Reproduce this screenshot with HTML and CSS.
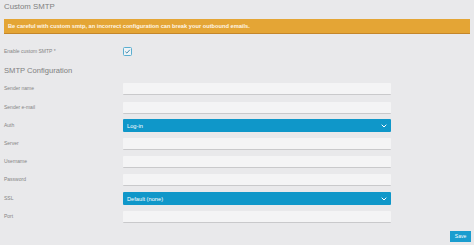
FILE: index.html
```html
<!DOCTYPE html>
<html>
<head>
<meta charset="utf-8">
<link rel="stylesheet" href="styles.css">
</head>
<body>
<div class="page">
  <h1 class="title">Custom SMTP</h1>
  <div class="alert">Be careful with custom smtp, an incorrect configuration can break your outbound emails.</div>
  <div class="row enable">
    <span class="label">Enable custom SMTP *</span>
    <span class="checkbox">
      <svg viewBox="0 0 9 9" width="9" height="9"><rect x="0.5" y="0.5" width="8" height="8" rx="1" fill="#eef3f6" stroke="#5aaed0" stroke-width="1"/><path d="M2.3 4.6 L3.9 6.1 L6.8 2.8" fill="none" stroke="#2f7fa6" stroke-width="0.9"/></svg>
    </span>
  </div>
  <h2 class="subtitle">SMTP Configuration</h2>
  <div class="form">
    <div class="row"><span class="label">Sender name</span><span class="input"></span></div>
    <div class="row"><span class="label">Sender e-mail</span><span class="input"></span></div>
    <div class="row"><span class="label">Auth</span><span class="select"><span>Log-in</span><svg class="chev" viewBox="0 0 6 4" width="6" height="4"><path d="M0.7 0.7 L3 3 L5.3 0.7" fill="none" stroke="#fff" stroke-width="1"/></svg></span></div>
    <div class="row"><span class="label">Server</span><span class="input"></span></div>
    <div class="row"><span class="label">Username</span><span class="input"></span></div>
    <div class="row"><span class="label">Password</span><span class="input"></span></div>
    <div class="row"><span class="label">SSL</span><span class="select"><span>Default (none)</span><svg class="chev" viewBox="0 0 6 4" width="6" height="4"><path d="M0.7 0.7 L3 3 L5.3 0.7" fill="none" stroke="#fff" stroke-width="1"/></svg></span></div>
    <div class="row"><span class="label">Port</span><span class="input"></span></div>
  </div>
  <div class="actions"><span class="save">Save</span></div>
</div>
</body>
</html>
```
FILE: styles.css
```css
html, body {
  margin: 0;
  padding: 0;
}
body {
  background: #e9e9eb;
  font-family: "Liberation Sans", Arial, sans-serif;
  color: #666;
  width: 474px;
  height: 245px;
  overflow: hidden;
}
.page {
  padding: 1px 4px 0 4px;
}
.title {
  font-weight: normal;
  font-size: 7.8px;
  line-height: 12px;
  margin: 0;
  color: #808080;
}
.alert {
  margin-top: 6px;
  background: #e4a535;
  border-bottom: 1px solid #c4862a;
  color: #fff6e6;
  font-size: 5.7px;
  font-weight: bold;
  height: 14px;
  line-height: 14px;
  padding: 0 4px;
}
.row {
  display: flex;
  align-items: center;
  height: 18.2px;
}
.label {
  width: 119px;
  flex: none;
  font-size: 5px;
  color: #858585;
  margin-top: -2px;
}
.enable {
  margin-top: 12px;
  height: 10px;
}
.enable .label {
  margin-top: 0;
}
.checkbox {
  display: flex;
}
.subtitle {
  font-weight: normal;
  font-size: 7.6px;
  line-height: 12px;
  margin: 9px 0 0 0;
  color: #808080;
}
.form {
  margin-top: 3.4px;
}
.input {
  width: 268px;
  height: 11px;
  background: #f4f4f5;
  border-bottom: 1px solid #c9c9cb;
  border-radius: 1px;
}
.select {
  width: 268px;
  height: 13px;
  background: #0f97c9;
  border-radius: 1px;
  color: #fff;
  font-size: 5.7px;
  display: flex;
  align-items: center;
  justify-content: space-between;
  padding: 0 4px;
  box-sizing: border-box;
}
.chev {
  display: block;
}
.actions {
  display: flex;
  justify-content: flex-end;
  margin-top: 5px;
}
.save {
  background: #1a9dcf;
  color: #fff;
  font-size: 5px;
  width: 21px;
  height: 11px;
  line-height: 11px;
  text-align: center;
  margin-right: -1px;
}
```
